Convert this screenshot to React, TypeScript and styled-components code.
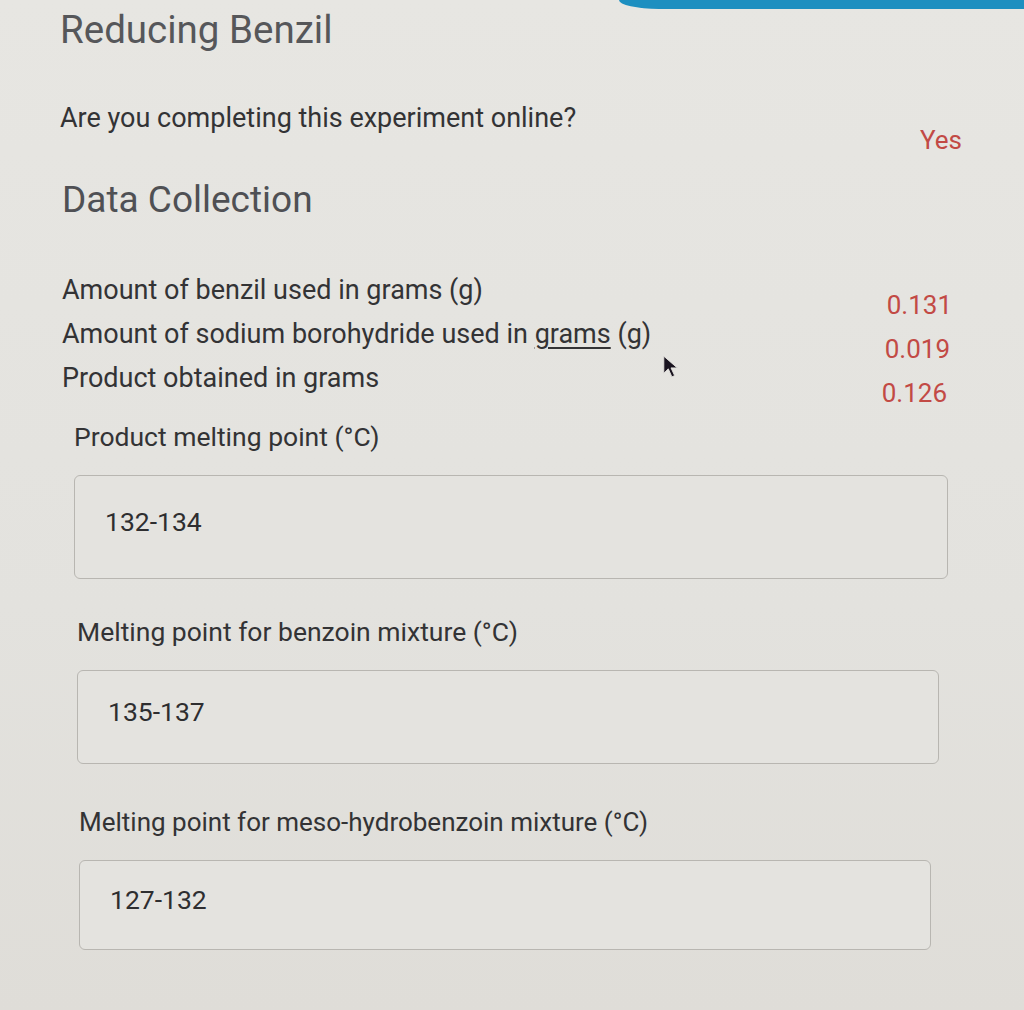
import styled, { createGlobalStyle } from 'styled-components';

const Global = createGlobalStyle`
  html, body {
    margin: 0;
    padding: 0;
    background: #e3e2de;
  }
  body {
    font-family: Roboto, 'Liberation Sans', Arial, sans-serif;
  }
`;

const Page = styled.div`
  width: 1024px;
  height: 1010px;
  overflow: hidden;
  position: relative;
  background: linear-gradient(180deg, #e7e6e2 0%, #e3e2de 60%, #dfddd8 100%);
`;

const TopStrip = styled.div`
  display: flex;
  height: 9px;
`;

const BlueBar = styled.div`
  margin-left: auto;
  width: 405px;
  background: #1d8fc0;
  border-bottom-left-radius: 40px 9px;
`;

const Content = styled.div`
  padding: 0 62px 0 60px;
  display: flex;
  flex-direction: column;
`;

const Title = styled.h1`
  margin: -1px 0 0;
  font-size: 38.5px;
  line-height: 44px;
  font-weight: 400;
  color: #56575a;
`;

const QuestionRow = styled.div`
  display: flex;
  justify-content: space-between;
  margin-top: 50px;
`;

const Question = styled.div`
  font-size: 27px;
  line-height: 32px;
  color: #333335;
`;

const Answer = styled.div<{ $top?: number; $right?: number }>`
  color: #c24a45;
  font-size: 26px;
  line-height: 32px;
  margin-top: ${p => p.$top ?? 0}px;
  margin-right: ${p => p.$right ?? 0}px;
`;

const Section = styled.h2`
  margin: 22px 0 0 2px;
  font-size: 37px;
  line-height: 44px;
  font-weight: 400;
  color: #4f5054;
`;

const DataList = styled.div`
  margin-top: 52px;
  display: flex;
  flex-direction: column;
  gap: 12px;
`;

const DataRow = styled.div`
  display: flex;
  justify-content: space-between;
  align-items: flex-start;
  padding-left: 2px;
  height: 32px;
`;

const DataLabel = styled.div`
  font-size: 27px;
  line-height: 32px;
  color: #333335;
`;

const Underlined = styled.span`
  text-decoration: underline;
  text-underline-offset: 4px;
`;

const Field = styled.div<{ $indent: number; $top: number }>`
  display: flex;
  flex-direction: column;
  padding-left: ${p => p.$indent}px;
  margin-top: ${p => p.$top}px;
`;

const FieldLabel = styled.div<{ $size?: number }>`
  font-size: ${p => p.$size ?? 26.5}px;
  line-height: 32px;
  color: #333335;
`;

const InputBox = styled.div<{ $w: number; $h: number; $top: number }>`
  margin-top: ${p => p.$top}px;
  width: ${p => p.$w}px;
  height: ${p => p.$h}px;
  border: 1.5px solid #b8b6b1;
  border-radius: 6px;
  background: #e4e3df;
  display: flex;
  align-items: center;
  padding-left: 30px;
  padding-bottom: 12px;
  box-sizing: border-box;
  font-size: 26.5px;
  color: #2e2e30;
`;

const Cursor = styled.svg`
  position: absolute;
  left: 662px;
  top: 355px;
  width: 18px;
  height: 24px;
`;

export default function App() {
  return (
    <Page>
      <Global />
      <TopStrip>
        <BlueBar />
      </TopStrip>
      <Content>
        <Title>Reducing Benzil</Title>
        <QuestionRow>
          <Question>Are you completing this experiment online?</Question>
          <Answer $top={22}>Yes</Answer>
        </QuestionRow>
        <Section>Data Collection</Section>
        <DataList>
          <DataRow>
            <DataLabel>Amount of benzil used in grams (g)</DataLabel>
            <Answer $top={15} $right={10}>0.131</Answer>
          </DataRow>
          <DataRow>
            <DataLabel>
              Amount of sodium borohydride used in <Underlined>grams</Underlined> (g)
            </DataLabel>
            <Answer $top={15} $right={12}>0.019</Answer>
          </DataRow>
          <DataRow>
            <DataLabel>Product obtained in grams</DataLabel>
            <Answer $top={15} $right={15}>0.126</Answer>
          </DataRow>
        </DataList>
        <Field $indent={14} $top={27}>
          <FieldLabel>Product melting point (°C)</FieldLabel>
          <InputBox $w={874} $h={104} $top={22}>132-134</InputBox>
        </Field>
        <Field $indent={17} $top={37}>
          <FieldLabel>Melting point for benzoin mixture (°C)</FieldLabel>
          <InputBox $w={862} $h={94} $top={22}>135-137</InputBox>
        </Field>
        <Field $indent={19} $top={42}>
          <FieldLabel $size={26}>Melting point for meso-hydrobenzoin mixture (°C)</FieldLabel>
          <InputBox $w={852} $h={90} $top={22}>127-132</InputBox>
        </Field>
      </Content>
      <Cursor viewBox="0 0 20 26">
        <path d="M2 1 L2 20 L7 15 L11 24 L14 22.5 L10 14 L17 14 Z" fill="#1a1420" stroke="#e4e3df" strokeWidth="1" />
      </Cursor>
    </Page>
  );
}
